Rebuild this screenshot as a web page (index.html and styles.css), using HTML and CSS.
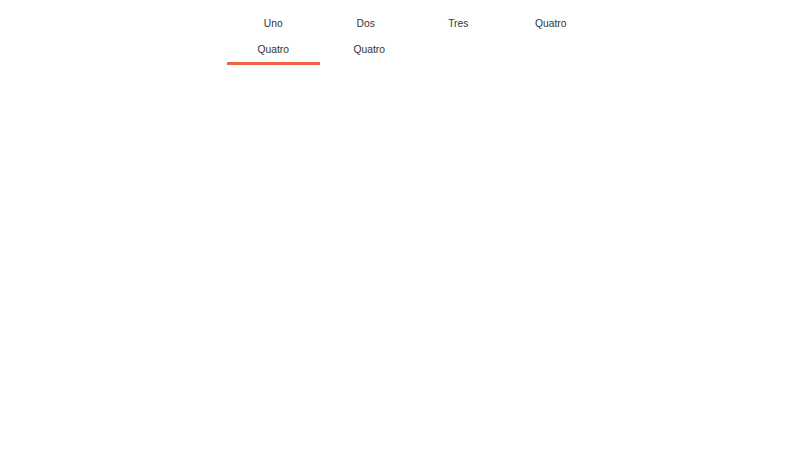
FILE: index.html
```html
<!DOCTYPE html>
<html>
<head>
<meta charset="utf-8">
<link rel="stylesheet" href="styles.css">
</head>
<body>
<nav class="tabs">
  <div class="tab">Uno</div>
  <div class="tab">Dos</div>
  <div class="tab">Tres</div>
  <div class="tab">Quatro</div>
  <div class="tab">Quatro</div>
  <div class="tab shifted">Quatro</div>
</nav>
<div class="ink-bar"></div>
</body>
</html>
```
FILE: styles.css
```css
html, body {
  margin: 0;
  padding: 0;
  background: #ffffff;
}
body {
  font-family: "Liberation Sans", Arial, sans-serif;
  color: #333333;
}
.tabs {
  display: grid;
  grid-template-columns: repeat(4, 92.5px);
  width: 370px;
  margin-left: 227px;
  padding-top: 10px;
}
.tab {
  height: 26px;
  line-height: 27px;
  text-align: center;
  font-size: 10.3px;
}
.tab.shifted {
  padding-left: 7px;
}
.ink-bar {
  margin-left: 227px;
  width: 93px;
  height: 3px;
  background-color: rgb(239, 100, 72);
}
```
